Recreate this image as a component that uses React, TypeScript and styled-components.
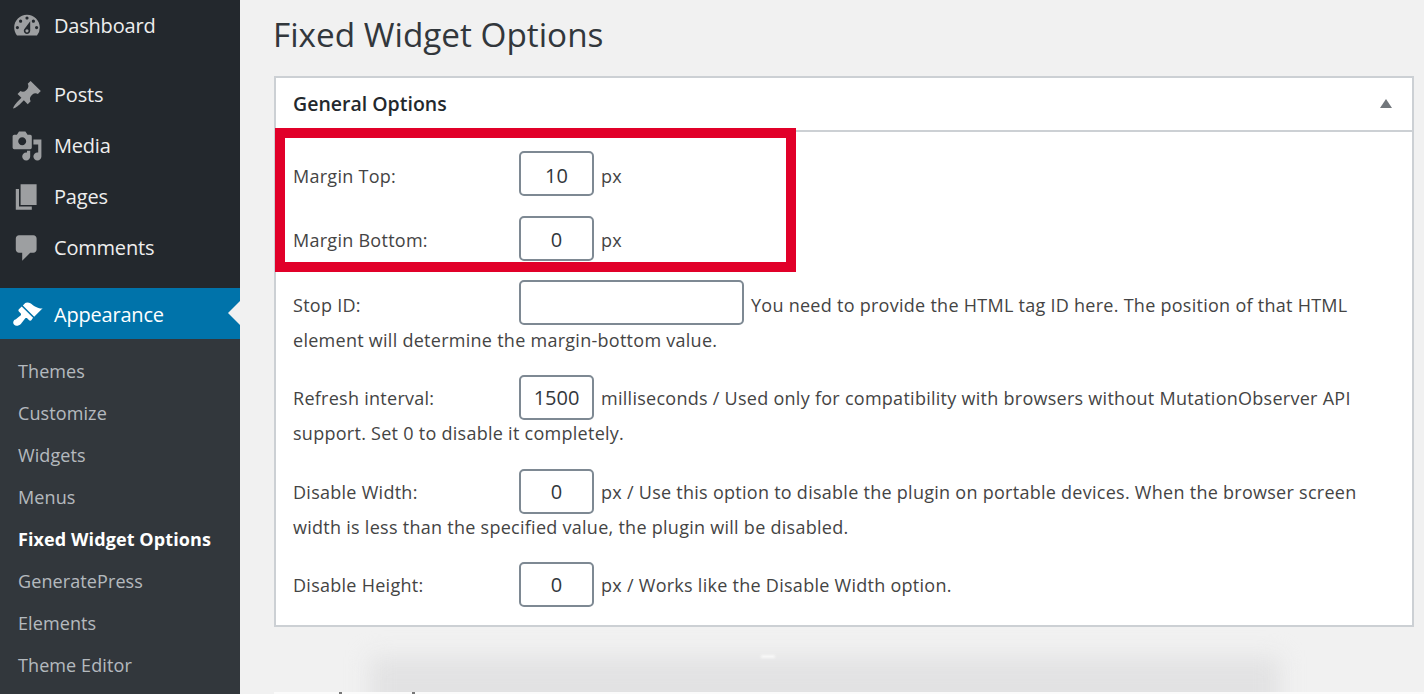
import React from 'react';
import styled, { createGlobalStyle } from 'styled-components';

const icons: Record<string, string> = {
  dashboard:
    'M3.76 16h12.48A7.97 7.97 0 0 0 18 11c0-4.42-3.58-8-8-8s-8 3.58-8 8c0 1.89.66 3.63 1.76 5zM10 4c.55 0 1 .45 1 1s-.45 1-1 1-1-.45-1-1 .45-1 1-1zM6 6c.55 0 1 .45 1 1s-.45 1-1 1-1-.45-1-1 .45-1 1-1zm8 0c.55 0 1 .45 1 1s-.45 1-1 1-1-.45-1-1 .45-1 1-1zm-5.37 5.55L12 7v6c0 1.1-.9 2-2 2s-2-.9-2-2c0-.57.24-1.08.63-1.45zM4 10c.55 0 1 .45 1 1s-.45 1-1 1-1-.45-1-1 .45-1 1-1zm12 0c.55 0 1 .45 1 1s-.45 1-1 1-1-.45-1-1 .45-1 1-1zm-5 3c0-.55-.45-1-1-1s-1 .45-1 1 .45 1 1 1 1-.45 1-1z',
  posts:
    'M10.44 3.02l1.82-1.82 6.36 6.35-1.83 1.82c-1.05-.68-2.48-.57-3.41.36l-.75.75c-.92.93-1.04 2.35-.35 3.41l-1.83 1.82-2.41-2.41-2.8 2.79c-.42.42-3.38 2.71-3.8 2.29s1.86-3.39 2.28-3.81l2.79-2.79L4.1 9.36l1.83-1.82c1.05.69 2.48.57 3.4-.36l.75-.75c.93-.92 1.05-2.35.36-3.41z',
  media:
    'M13 11V4c0-.55-.45-1-1-1h-1.67L9 1H5L3.67 3H2c-.55 0-1 .45-1 1v7c0 .55.45 1 1 1h10c.55 0 1-.45 1-1zM7 4.5c1.38 0 2.5 1.12 2.5 2.5S8.38 9.5 7 9.5 4.5 8.38 4.5 7 5.62 4.5 7 4.5zM14 6h5v10.5c0 1.38-1.12 2.5-2.5 2.5S14 17.88 14 16.5s1.12-2.5 2.5-2.5c.17 0 .34.02.5.05V9h-3V6zm-4 8.05V13h2v3.5c0 1.38-1.12 2.5-2.5 2.5S7 17.88 7 16.5 8.12 14 9.5 14c.17 0 .34.02.5.05z',
  pages: 'M6 15V2h10v13H6zm-1 1h8v2H3V5h2v11z',
  comments: 'M5 2h9c1.1 0 2 .9 2 2v7c0 1.1-.9 2-2 2h-2l-5 5v-5H5c-1.1 0-2-.9-2-2V4c0-1.1.9-2 2-2z',
  appearance:
    'M14.48 11.06L7.41 3.99l1.5-1.5c.5-.56 2.3-.47 3.51.32 1.21.8 1.43 1.28 2.91 2.1 1.18.64 2.45 1.26 4.45.85zm-.71.71L6.7 4.7 4.93 6.47c-.39.39-.39 1.02 0 1.41l1.06 1.06c.39.39.39 1.03 0 1.42-.6.6-1.43 1.11-2.21 1.69-.35.26-.7.53-1.01.84C1.43 13.23.91 15.08 2 16.17c1.1 1.09 2.94.58 4.29-.77.3-.3.58-.66.84-1.01.58-.78 1.09-1.61 1.69-2.21.39-.39 1.03-.39 1.42 0l1.06 1.06c.39.39 1.02.39 1.41 0z',
};

const topItems = [
  { name: 'Posts', icon: 'posts' },
  { name: 'Media', icon: 'media' },
  { name: 'Pages', icon: 'pages' },
  { name: 'Comments', icon: 'comments' },
];

const subItems = ['Themes', 'Customize', 'Widgets', 'Menus', 'Fixed Widget Options', 'GeneratePress', 'Elements', 'Theme Editor'];

const Icon = ({ name }: { name: string }) => (
  <MenuIcon viewBox="0 0 20 20" aria-hidden="true">
    <path d={icons[name]} />
  </MenuIcon>
);

const App = () => {
  return (
    <>
      <Global />
      <Page>
        <Sidebar>
          <DashRow>
            <Icon name="dashboard" />
            Dashboard
          </DashRow>
          <TopGroup>
            {topItems.map((item) => (
              <MenuRow key={item.name}>
                <Icon name={item.icon} />
                {item.name}
              </MenuRow>
            ))}
          </TopGroup>
          <ActiveRow>
            <Icon name="appearance" />
            Appearance
          </ActiveRow>
          <SubMenu>
            {subItems.map((item) => (
              <SubItem key={item} $current={item === 'Fixed Widget Options'}>
                {item}
              </SubItem>
            ))}
          </SubMenu>
        </Sidebar>

        <Main>
          <Heading>Fixed Widget Options</Heading>
          <Card>
            <CardHeader>
              <h2>General Options</h2>
              <Caret />
            </CardHeader>
            <CardBody>
              <Highlight />
              <Option>
                <Label>Margin Top:</Label>
                <Field defaultValue="10" readOnly />
                px
              </Option>
              <Option $gap={29}>
                <Label>Margin Bottom:</Label>
                <Field $drop={2} defaultValue="0" readOnly />
                px
              </Option>
              <Option $gap={30}>
                <Label>Stop ID:</Label>
                <Field $wide defaultValue="" readOnly />
                You need to provide the HTML tag ID here. The position of that HTML element will determine the margin-bottom value.
              </Option>
              <Option $gap={23}>
                <Label>Refresh interval:</Label>
                <Field $drop={1} defaultValue="1500" readOnly />
                milliseconds / Used only for compatibility with browsers without MutationObserver API support. Set 0 to disable it completely.
              </Option>
              <Option $gap={24}>
                <Label>Disable Width:</Label>
                <Field $drop={1} defaultValue="0" readOnly />
                px / Use this option to disable the plugin on portable devices. When the browser screen width is less than the specified value, the plugin will be disabled.
              </Option>
              <Option $gap={23}>
                <Label>Disable Height:</Label>
                <Field $drop={1} defaultValue="0" readOnly />
                px / Works like the Disable Width option.
              </Option>
            </CardBody>
          </Card>
          <Below>
            <Smudge />
            <SmudgeMark />
            <NextCardEdge />
          </Below>
        </Main>
      </Page>
    </>
  );
};

const Global = createGlobalStyle`
  html, body {
    margin: 0;
    height: 100%;
    overflow: hidden;
    background: #f1f1f1;
  }
  * {
    box-sizing: border-box;
  }
`;

const Page = styled.div`
  display: flex;
  width: 1424px;
  height: 694px;
  overflow: hidden;
  font-family: "Open Sans", "Noto Sans", "Liberation Sans", sans-serif;
`;

const Sidebar = styled.nav`
  flex: 0 0 240px;
  background: #23282d;
  color: #eee;
  display: flex;
  flex-direction: column;
`;

const MenuIcon = styled.svg`
  width: 32px;
  height: 32px;
  margin-right: 11px;
  fill: currentColor;
  opacity: 0.6;
  flex: none;
`;

const MenuRow = styled.div`
  display: flex;
  align-items: center;
  height: 51px;
  padding-left: 11px;
  font-size: 20px;
  letter-spacing: -0.2px;
  color: #eee;
`;

const DashRow = styled(MenuRow)`
  height: 51px;
`;

const TopGroup = styled.div`
  padding: 18px 0 15px;
  display: flex;
  flex-direction: column;
`;

const ActiveRow = styled(MenuRow)`
  position: relative;
  padding-top: 2px;
  background: #0073aa;
  color: #fff;

  ${MenuIcon} {
    opacity: 1;
  }

  &::after {
    content: "";
    position: absolute;
    right: 0;
    top: 13px;
    border: 12px solid transparent;
    border-right-color: #f1f1f1;
    border-left-width: 0;
  }
`;

const SubMenu = styled.div`
  flex: 1;
  background: #32373c;
  padding-top: 11px;
  display: flex;
  flex-direction: column;
`;

const SubItem = styled.div<{ $current?: boolean }>`
  height: 42px;
  line-height: 42px;
  padding-left: 18px;
  font-size: 18px;
  letter-spacing: 0.1px;
  white-space: nowrap;
  font-weight: ${(p) => (p.$current ? 700 : 400)};
  color: ${(p) => (p.$current ? '#fff' : 'rgba(240, 245, 250, 0.7)')};
`;

const Main = styled.main`
  flex: 1;
  min-width: 0;
  padding: 10px 10px 0 34px;
`;

const Heading = styled.h1`
  margin: 0 0 16px -1px;
  height: 50px;
  line-height: 48px;
  font-size: 33.3px;
  font-weight: 400;
  letter-spacing: 0;
  color: #32373c;
`;

const Card = styled.section`
  height: 551px;
  background: #fff;
  border: 2px solid #ccd0d4;
`;

const CardHeader = styled.header`
  display: flex;
  align-items: center;
  justify-content: space-between;
  height: 54px;
  padding: 0 20px 2px 17px;
  border-bottom: 2px solid #ccd0d4;

  h2 {
    margin: 0;
    font-size: 19.5px;
    font-weight: 600;
    letter-spacing: 0;
    color: #23282d;
  }
`;

const Caret = styled.span`
  width: 0;
  height: 0;
  border: 6.5px solid transparent;
  border-top-width: 0;
  border-bottom: 9px solid #72777c;
`;

const CardBody = styled.div`
  position: relative;
  padding: 27px 17px 0;
  font-size: 18px;
  letter-spacing: 0.27px;
  color: #444;
`;

const Highlight = styled.div`
  position: absolute;
  left: -1px;
  top: -4px;
  width: 521px;
  height: 144px;
  border: 10px solid #e10029;
  pointer-events: none;
`;

const Option = styled.div<{ $gap?: number }>`
  margin-top: ${(p) => p.$gap ?? 0}px;
  line-height: 35px;
`;

const Label = styled.span`
  display: inline-block;
  width: 226px;
`;

const Field = styled.input<{ $wide?: boolean; $drop?: number }>`
  width: ${(p) => (p.$wide ? 225 : 75)}px;
  height: 45px;
  margin: -12px 7px -12px 0;
  padding: ${(p) => p.$drop ?? 5}px 0 0;
  border: 2px solid #7e8993;
  border-radius: 5px;
  background: #fff;
  font: inherit;
  font-size: 20px;
  letter-spacing: 0;
  color: #32373c;
  text-align: center;
  vertical-align: baseline;
  outline: none;
`;

const Below = styled.div`
  position: relative;
  height: 57px;
`;

const Smudge = styled.div`
  position: absolute;
  left: 96px;
  top: 30px;
  width: 910px;
  height: 60px;
  background: #e2e2e3;
  filter: blur(11px);
`;

const SmudgeMark = styled.span`
  position: absolute;
  left: 487px;
  top: 28px;
  width: 14px;
  height: 3px;
  background: #f8f8f8;
  filter: blur(1px);
`;

const NextCardEdge = styled.div`
  position: absolute;
  left: 0;
  right: -10px;
  top: 65px;
  height: 2px;
  background: #fbfbfb;

  &::before,
  &::after {
    content: "";
    position: absolute;
    top: 0;
    width: 3px;
    height: 2px;
    background: #777;
  }
  &::before {
    left: 65px;
  }
  &::after {
    left: 138px;
  }
`;

export default App;
